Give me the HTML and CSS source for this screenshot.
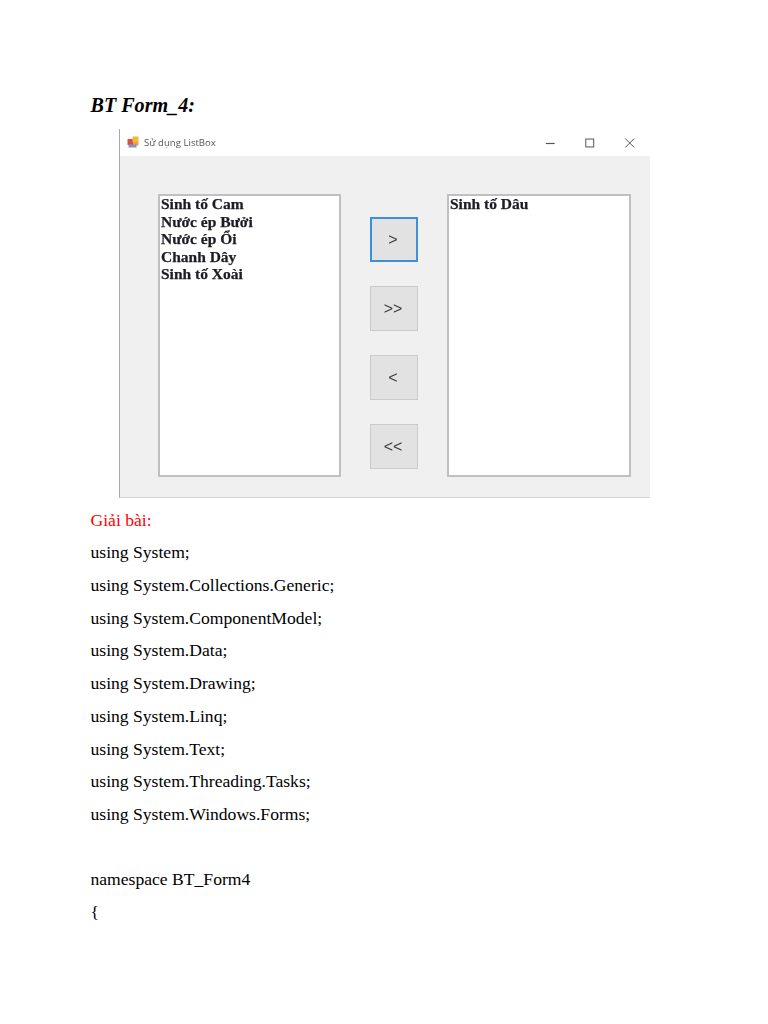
FILE: index.html
```html
<!DOCTYPE html>
<html lang="vi">
<head>
<meta charset="utf-8">
<title>BT Form_4</title>
<link rel="stylesheet" href="styles.css">
</head>
<body>
<main class="page">
  <h1 class="heading">BT Form_4:</h1>
  <div class="window">
    <div class="titlebar">
      <svg class="app-icon" viewBox="0 0 12 12" width="12" height="12" aria-hidden="true">
        <rect x="0.5" y="3" width="6" height="6" fill="#d9503f"/>
        <rect x="5.5" y="0.5" width="6" height="5.5" fill="#eebc3c"/>
        <rect x="6" y="6" width="5.5" height="3.5" fill="#e8a33a"/>
        <rect x="1.5" y="8.5" width="8" height="3" fill="#7f8fd0"/>
      </svg>
      <span class="window-title">Sử dụng ListBox</span>
      <div class="controls">
        <svg class="control" viewBox="0 0 40 14" aria-hidden="true"><path d="M15 7.5h9" stroke="#555" stroke-width="1.2" fill="none"/></svg>
        <svg class="control" viewBox="0 0 40 14" aria-hidden="true"><rect x="16" y="3" width="8" height="8" stroke="#555" stroke-width="1" fill="none"/></svg>
        <svg class="control" viewBox="0 0 40 14" aria-hidden="true"><path d="M15.5 2.5l9 9M24.5 2.5l-9 9" stroke="#555" stroke-width="1" fill="none"/></svg>
      </div>
    </div>
    <div class="client">
      <div class="listbox">
        <div>Sinh tố Cam</div>
        <div>Nước ép Bưởi</div>
        <div>Nước ép Ổi</div>
        <div>Chanh Dây</div>
        <div>Sinh tố Xoài</div>
      </div>
      <div class="buttons">
        <div class="btn btn-focus">&gt;</div>
        <div class="btn">&gt;&gt;</div>
        <div class="btn">&lt;</div>
        <div class="btn">&lt;&lt;</div>
      </div>
      <div class="listbox listbox-wide">
        <div>Sinh tố Dâu</div>
      </div>
    </div>
  </div>
  <p class="line answer">Giải bài:</p>
  <p class="line">using System;</p>
  <p class="line">using System.Collections.Generic;</p>
  <p class="line">using System.ComponentModel;</p>
  <p class="line">using System.Data;</p>
  <p class="line">using System.Drawing;</p>
  <p class="line">using System.Linq;</p>
  <p class="line">using System.Text;</p>
  <p class="line">using System.Threading.Tasks;</p>
  <p class="line">using System.Windows.Forms;</p>
  <p class="line">&nbsp;</p>
  <p class="line">namespace BT_Form4</p>
  <p class="line">{</p>
</main>
</body>
</html>
```
FILE: styles.css
```css
html, body {
  margin: 0;
  padding: 0;
  background: #fff;
}

.page {
  height: 1024px;
  box-sizing: border-box;
  padding: 92px 0 0 90.5px;
  overflow: hidden;
  font-family: "Liberation Serif", "Times New Roman", serif;
  color: #000;
}

.heading {
  margin: 0;
  font-size: 20.1px;
  line-height: 27px;
  font-weight: bold;
  font-style: italic;
}

.window {
  width: 531px;
  height: 369px;
  margin: 10px 0 5.6px 28.5px;
  box-sizing: border-box;
  border-left: 1px solid #a9a9a9;
  border-bottom: 1px solid #d4d4d4;
  background: #f0f0f0;
  display: flex;
  flex-direction: column;
  filter: blur(0.45px);
}

.titlebar {
  height: 27px;
  flex: none;
  background: #fff;
  display: flex;
  align-items: center;
  padding: 0 1px 0 7px;
  font-family: "Open Sans", "Liberation Sans", sans-serif;
  font-size: 9.6px;
  color: #555;
}

.app-icon {
  flex: none;
  margin: 0 5px 2px 0;
}

.window-title {
  flex: 1;
}

.controls {
  display: flex;
  flex: none;
}

.control {
  width: 39.5px;
  height: 14px;
}

.client {
  flex: 1;
  display: flex;
  align-items: flex-start;
  padding: 38px 18px 0 38px;
}

.listbox {
  width: 183px;
  height: 283px;
  flex: none;
  box-sizing: border-box;
  border: 2px solid #c0c0c0;
  background: #fff;
  padding: 0 1px;
  font-family: "Liberation Serif", "Times New Roman", serif;
  font-size: 15.5px;
  font-weight: bold;
  line-height: 17.5px;
  color: #1c1c24;
  -webkit-text-stroke: 0.25px #1c1c24;
}

.listbox > div:first-child {
  margin-top: -1px;
}

.listbox-wide {
  width: 184px;
}

.buttons {
  width: 48px;
  margin: 23px 29px 0;
  flex: none;
  display: flex;
  flex-direction: column;
  gap: 24px;
}

.btn {
  height: 45px;
  box-sizing: border-box;
  border: 1px solid #cacaca;
  background: #e2e2e2;
  padding-right: 2px;
  display: flex;
  align-items: center;
  justify-content: center;
  font-family: "Liberation Sans", Arial, sans-serif;
  font-size: 16px;
  color: #3a3a3a;
}

.btn-focus {
  border: 2px solid #3c8fdc;
}

.line {
  margin: 0;
  font-size: 17.6px;
  line-height: 32.7px;
}

.answer {
  color: #ff0000;
}
```
